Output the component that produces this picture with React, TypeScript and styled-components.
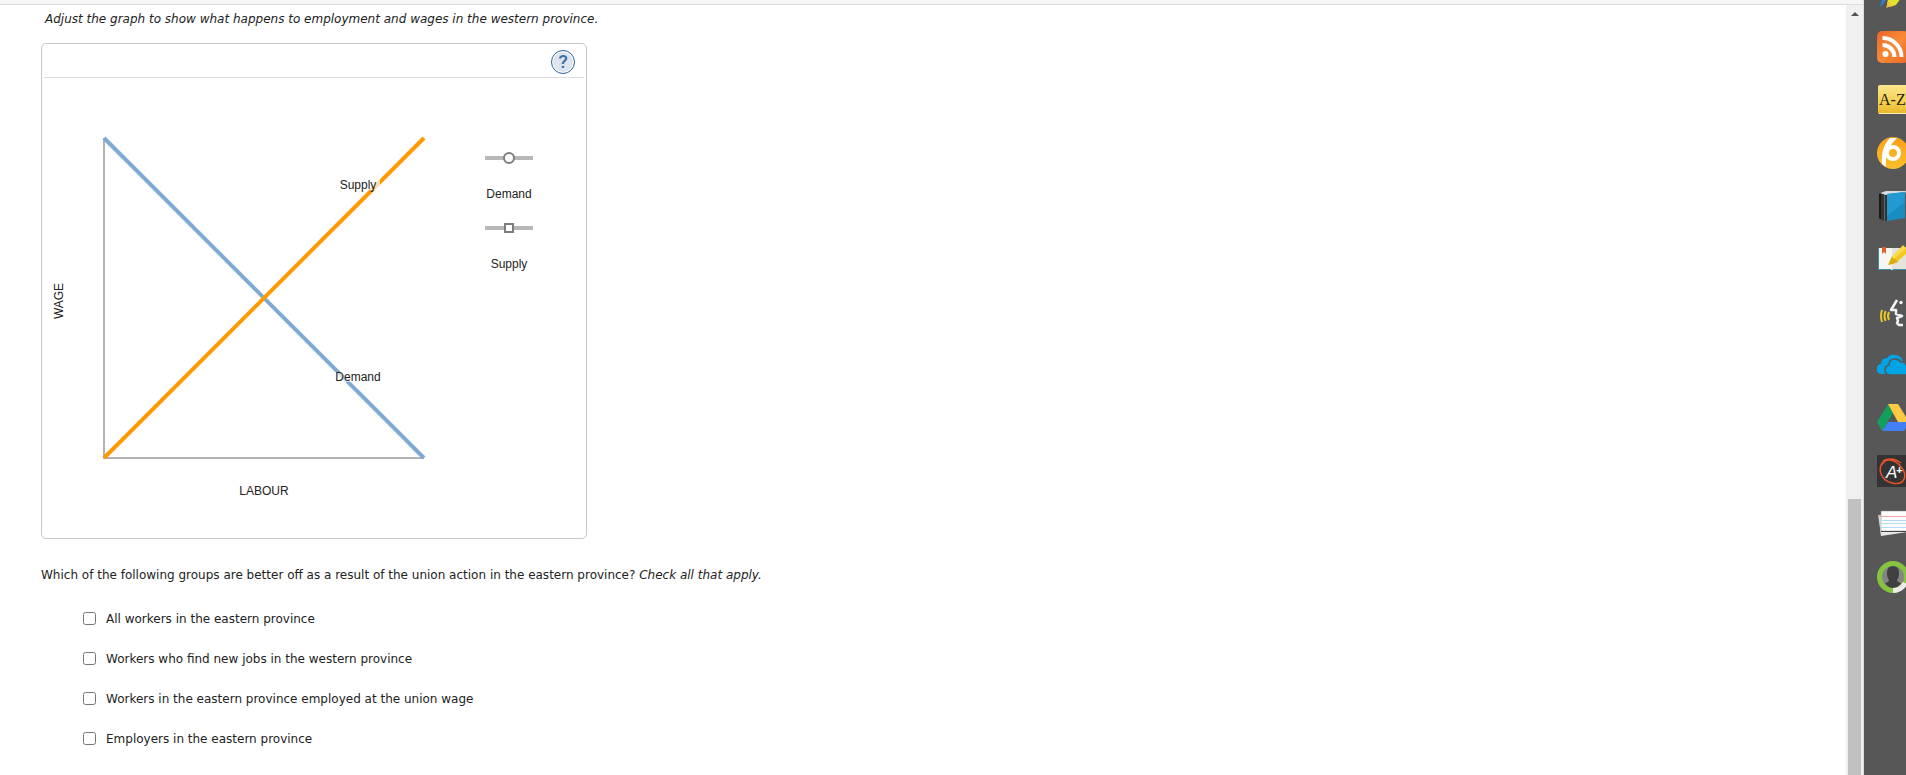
import React from "react";
import styled, { createGlobalStyle, css } from "styled-components";

const GlobalStyle = createGlobalStyle`
  *, *::before, *::after { box-sizing: border-box; }
  body {
    margin: 0;
    background: #fff;
    color: #222;
    font-family: Verdana, "DejaVu Sans", sans-serif;
    font-size: 12px;
    line-height: 16px;
  }
`;

const Shell = styled.div`
  display: flex;
  height: 100vh;
  overflow: hidden;
`;

const Frame = styled.div`
  flex: 1;
  min-width: 0;
  display: flex;
  flex-direction: column;
  border-right: 1px solid #dcdcdc;
`;

const TopEdge = styled.div`
  flex: none;
  height: 5px;
  background: #f6f6f6;
  border-bottom: 1px solid #dcdcdc;
`;

const Body = styled.div`
  flex: 1;
  min-height: 0;
  display: flex;
`;

const Content = styled.main`
  flex: 1;
  min-width: 0;
  overflow: hidden;
  padding: 6px 40px 0 41px;
`;

const Instruction = styled.p`
  margin: 0 0 16px;
  padding-left: 4px;
  font-style: italic;
`;

const Panel = styled.section`
  width: 546px;
  max-width: 100%;
  border: 1px solid #c8c8c8;
  border-radius: 5px;
  padding: 0 2px 32px;
`;

const PanelHeader = styled.header`
  display: flex;
  justify-content: flex-end;
  align-items: center;
  height: 34px;
  padding: 2px 9px 0 0;
  border-bottom: 1px solid #dcdcdc;
`;

const HelpButton = styled.button`
  width: 24px;
  height: 24px;
  padding: 0;
  border: 1px solid #2f66a0;
  border-radius: 50%;
  background: #dce5ee;
  box-shadow: inset 0 0 0 1px #fff;
  color: #3a6ea5;
  font: 500 19px/22px Roboto, "Liberation Sans", sans-serif;
  text-align: center;
`;

const PanelBody = styled.div`
  display: flex;
  gap: 48px;
  padding-top: 48px;
  font-family: Arial, "Liberation Sans", sans-serif;
`;

const Graph = styled.svg`
  display: block;
  flex: none;
  width: 392px;
  height: 380px;
  font-size: 12px;
  fill: #222;
`;

const Controls = styled.div`
  display: flex;
  flex-direction: column;
  gap: 18px;
  padding-top: 24px;
`;

const Control = styled.label`
  display: flex;
  flex-direction: column;
  align-items: center;
  gap: 20px;
  width: 50px;
`;

const thumb = css<{ $round?: boolean }>`
  appearance: none;
  width: ${(p) => (p.$round ? 12 : 10)}px;
  height: ${(p) => (p.$round ? 12 : 10)}px;
  border: 2px solid #7d7d7d;
  border-radius: ${(p) => (p.$round ? "50%" : "0")};
  background: #fff;
`;

const Slider = styled.input<{ $round?: boolean }>`
  appearance: none;
  width: 48px;
  height: 16px;
  margin: 0;
  background: linear-gradient(#b8b8b8, #b8b8b8) center / 100% 4px no-repeat;
  &::-webkit-slider-thumb { ${thumb} }
  &::-moz-range-thumb { ${thumb} }
`;

const Question = styled.fieldset`
  margin: 28px 0 0;
  padding: 0;
  border: 0;
`;

const Legend = styled.legend`
  padding: 0;
`;

const Options = styled.div`
  display: flex;
  flex-direction: column;
  gap: 24px;
  padding: 28px 0 0 42px;
`;

const Option = styled.label`
  display: flex;
  align-items: center;
  gap: 10px;
`;

const Tick = styled.input`
  width: 13px;
  height: 13px;
  margin: 0 0 2px;
`;

const ScrollTrack = styled.div`
  flex: none;
  display: flex;
  flex-direction: column;
  align-items: center;
  width: 17px;
  background: #f0f0f0;
`;

const ScrollArrow = styled.svg`
  flex: none;
  width: 17px;
  height: 17px;
  fill: #505050;
`;

const ScrollThumb = styled.div`
  width: 13px;
  height: 35.8%;
  margin-top: auto;
  background: #c1c1c1;
`;

const Dock = styled.nav`
  flex: none;
  width: 42px;
  overflow: hidden;
  background: #575757;
`;

const DockList = styled.div`
  display: flex;
  flex-direction: column;
  gap: 21px;
  margin-top: -22px;
  padding-left: 13px;
`;

const DockLink = styled.a`
  display: block;
  width: 32px;
  height: 32px;
`;

const Icon = styled.svg`
  display: block;
  width: 32px;
  height: 32px;
`;

const tools: { name: string; art: React.ReactNode }[] = [
  {
    name: "Highlighter",
    art: (
      <>
        <path d="M8 16l-4 8-1 5 4-4 4-7z" fill="#2f80d0" />
        <path d="M12 16l12 4-5 7-6 2-3-3z" fill="#e3e02c" />
        <path d="M11 24l-2 6 5-2 1-2z" fill="#f0c63c" />
      </>
    ),
  },
  {
    name: "RSS feed",
    art: (
      <>
        <defs>
          <linearGradient id="rss" x1="0" y1="0" x2="1" y2="1">
            <stop offset="0" stopColor="#e8662a" />
            <stop offset=".5" stopColor="#f98a35" />
            <stop offset="1" stopColor="#e8662a" />
          </linearGradient>
        </defs>
        <rect width="32" height="32" rx="5" fill="url(#rss)" />
        <circle cx="8.5" cy="23" r="3" fill="#fff" />
        <g fill="none" stroke="#fff" strokeWidth="4">
          <path d="M5.500 14A12 12 0 0 1 17.500 26" />
          <path d="M5.500 7A19 19 0 0 1 24.500 26" />
        </g>
      </>
    ),
  },
  {
    name: "Glossary",
    art: (
      <>
        <defs>
          <linearGradient id="az" x1="0" y1="0" x2="0" y2="1">
            <stop offset="0" stopColor="#fbe68e" />
            <stop offset=".6" stopColor="#f4d050" />
            <stop offset="1" stopColor="#e8b52a" />
          </linearGradient>
        </defs>
        <rect x="1" y="1" width="31" height="29" rx="2" fill="url(#az)" />
        <path d="M2 29.500h30" stroke="#fff2b0" />
        <text x="2" y="21" fontFamily="Liberation Serif, serif" fontSize="16" fill="#221d08">
          A-Z
        </text>
      </>
    ),
  },
  {
    name: "Bongo",
    art: (
      <>
        <defs>
          <linearGradient id="bo" x1="0" y1="0" x2="0" y2="1">
            <stop offset="0" stopColor="#f9a11b" />
            <stop offset="1" stopColor="#fdbe2b" />
          </linearGradient>
        </defs>
        <circle cx="16" cy="16" r="16" fill="url(#bo)" />
        <path d="M13 1C7 7 4 15 5 27l4 3C8 20 11 9 20 1z" fill="#fff" />
        <circle cx="16" cy="16" r="6" fill="none" stroke="#fff" strokeWidth="4" />
      </>
    ),
  },
  {
    name: "Book",
    art: (
      <>
        <path d="M2 4l3-2v28l-3-2z" fill="#1a1a1a" />
        <path d="M4 2h7v29l-7-1z" fill="#333" />
        <path d="M7 4h1v27H7z" fill="#666" />
        <path d="M3 3l6-2 20 0-1 3-19 1z" fill="#d8dde0" />
        <path d="M10 4l18-2v26l-18 3z" fill="#1a8cc0" />
        <path d="M10 4l18-2v10L10 26z" fill="#2299d0" />
      </>
    ),
  },
  {
    name: "Notes",
    art: (
      <>
        <path d="M1 5h14v22H1z" fill="#f7f5f0" />
        <path d="M15 5h17v22H15z" fill="#e4e4dc" />
        <path d="M1 26.500h13l1 1 1-1h16M1.500 5v22" fill="none" stroke="#3b8ea5" />
        <path d="M5 4h4v7L7 9l-2 2z" fill="#e2602c" />
        <path d="M26 2l6 6-12 11-5-5z" fill="#f4c91d" />
        <path d="M15 13l6 6-5 2-5 1z" fill="#d9ac10" />
        <path d="M26 3L15 14l2 2L29 5z" fill="#fbdc4b" />
      </>
    ),
  },
  {
    name: "Text to speech",
    art: (
      <>
        <g fill="none" stroke="#e9c62a" strokeWidth="2">
          <path d="M5 14q-2 6 0 12M8.500 15q-2 5 0 10M12 16q-2 4 0 8" />
        </g>
        <path d="M20 4l-6 10h5v4l6 2-5 2 1 3-1 2 2 2h4" fill="none" stroke="#f2f2f2" strokeWidth="2.500" strokeLinejoin="round" />
        <circle cx="24" cy="6.500" r="1.700" fill="#f2f2f2" />
      </>
    ),
  },
  {
    name: "OneDrive",
    art: (
      <>
        <path d="M5 25a5 5 0 0 1-1-10q0-6 6-6Q13 5 18 6q6 0 8 6l-14 13z" fill="#00a4e4" />
        <path
          d="M13 26q-5-1-5-5 0-4 4-5 0-6 6-6 4 0 6 3 4-1 5 3 4 0 4 5t-5 5z"
          fill="#00a4e4"
          stroke="#575757"
          strokeWidth="1.500"
        />
      </>
    ),
  },
  {
    name: "Google Drive",
    art: (
      <>
        <path d="M11 2L0 20l5 9 11-18z" fill="#12a05c" />
        <path d="M11 2h10l11 18H21z" fill="#fdcb43" />
        <path d="M11 20h21l-5 9H5z" fill="#4280f4" />
      </>
    ),
  },
  {
    name: "Grades",
    art: (
      <>
        <rect width="32" height="32" fill="#333" />
        <g fill="none" stroke="#e9532a" strokeWidth="1.500">
          <path d="M7 6C0 13 3 25 15 28c13 3 16-8 9-16C18 4 8 2 5 10" />
          <path d="M6 6q9-5 18 2" />
        </g>
        <g fontFamily="Liberation Sans, sans-serif" fontStyle="italic" fill="#fff">
          <text x="9" y="23" fontSize="17">A</text>
          <text x="19" y="19" fontSize="11" fontWeight="700">+</text>
        </g>
      </>
    ),
  },
  {
    name: "Flashcards",
    art: (
      <>
        <path d="M1 7l28-2 2 18-27 4z" fill="#bdbdbd" />
        <path d="M2 9l28 2v13L4 28z" fill="#e8e8e8" />
        <path d="M4 3h28v20H4z" fill="#fff" stroke="#8a8a8a" strokeWidth=".5" />
        <path d="M4 8.500h28" stroke="#f3a4a4" />
        <path d="M4 12.500h28M4 15.500h28M4 19.500h28" stroke="#b3ddf2" />
        <path d="M4 23.500h28" stroke="#444" />
      </>
    ),
  },
  {
    name: "Profile",
    art: (
      <>
        <circle cx="16" cy="16" r="12" fill="#858587" />
        <path d="M10 12q0-7 6-7t6 7q0 5-2 7 0 2 4 3-3 5-8 5t-8-5q4-1 4-3-2-2-2-7z" fill="#404040" />
        <circle cx="16" cy="16" r="13.500" fill="none" stroke="#86c440" strokeWidth="5" />
        <path d="M16 29.500A13.500 13.500 0 0 0 28 22" fill="none" stroke="#ececec" strokeWidth="5" />
      </>
    ),
  },
];

const options = [
  "All workers in the eastern province",
  "Workers who find new jobs in the western province",
  "Workers in the eastern province employed at the union wage",
  "Employers in the eastern province",
];

export default function App() {
  return (
    <>
      <GlobalStyle />
      <Shell>
        <Frame>
          <TopEdge />
          <Body>
            <Content>
              <Instruction>
                Adjust the graph to show what happens to employment and wages in the western province.
              </Instruction>
              <Panel>
                <PanelHeader>
                  <HelpButton type="button" aria-label="Help">?</HelpButton>
                </PanelHeader>
                <PanelBody>
                  <Graph viewBox="0 0 392 380" role="img" aria-label="Labour supply and demand">
                    <path d="M60 12v320h320" fill="none" stroke="#b3b3b3" strokeWidth="2" />
                    <path d="M60 12l320 320" stroke="#7eaad3" strokeWidth="4" />
                    <path d="M60 332L380 12" stroke="#ff9900" strokeWidth="4" />
                    <rect x="292" y="53" width="44" height="11" fill="#fff" fillOpacity=".65" />
                    <text x="314" y="63" textAnchor="middle">Supply</text>
                    <rect x="291" y="246" width="46" height="10" fill="#fff" fillOpacity=".65" />
                    <text x="314" y="255" textAnchor="middle">Demand</text>
                    <text x="220" y="369" textAnchor="middle">LABOUR</text>
                    <text transform="translate(19 175) rotate(-90)" textAnchor="middle">WAGE</text>
                  </Graph>
                  <Controls>
                    <Control>
                      <Slider type="range" $round defaultValue={50} />
                      Demand
                    </Control>
                    <Control>
                      <Slider type="range" defaultValue={50} />
                      Supply
                    </Control>
                  </Controls>
                </PanelBody>
              </Panel>
              <Question>
                <Legend>
                  Which of the following groups are better off as a result of the union action in the eastern province?{" "}
                  <em>Check all that apply.</em>
                </Legend>
                <Options>
                  {options.map((text) => (
                    <Option key={text}>
                      <Tick type="checkbox" />
                      {text}
                    </Option>
                  ))}
                </Options>
              </Question>
            </Content>
            <ScrollTrack>
              <ScrollArrow viewBox="0 0 17 17">
                <path d="M5 11l4-4 4 4z" />
              </ScrollArrow>
              <ScrollThumb />
            </ScrollTrack>
          </Body>
        </Frame>
        <Dock aria-label="Study tools">
          <DockList>
            {tools.map((tool) => (
              <DockLink key={tool.name} href="#" aria-label={tool.name}>
                <Icon viewBox="0 0 32 32">{tool.art}</Icon>
              </DockLink>
            ))}
          </DockList>
        </Dock>
      </Shell>
    </>
  );
}
